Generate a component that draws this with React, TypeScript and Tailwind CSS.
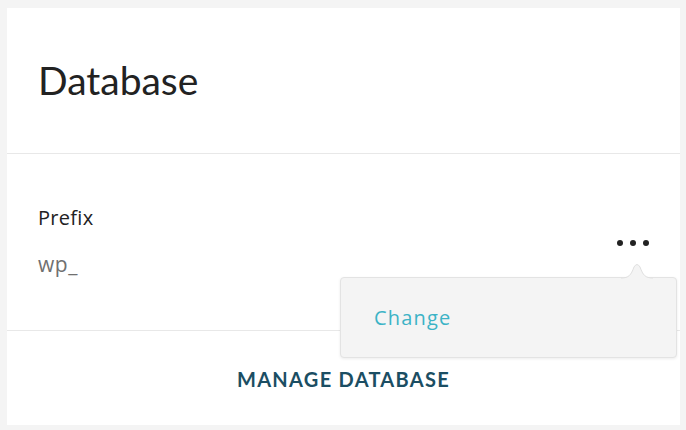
import React from 'react';

const font = { fontFamily: 'Lato, "Open Sans", sans-serif' };
const openSans = { fontFamily: '"Open Sans", Lato, sans-serif' };

const MoreDots: React.FC = () => (
  <div className="flex items-center gap-[7px]">
    <span className="block w-[6px] h-[6px] rounded-full bg-[#222]" />
    <span className="block w-[6px] h-[6px] rounded-full bg-[#222]" />
    <span className="block w-[6px] h-[6px] rounded-full bg-[#222]" />
  </div>
);

const Popover: React.FC = () => (
  <div className="absolute left-[333px] top-[269px] w-[337px] h-[81px]">
    {/* arrow */}
    <svg
      className="absolute left-[281px] top-[-14px]"
      width="32"
      height="16"
      viewBox="0 0 32 16"
    >
      <path
        d="M0 15 C8 15 10 12 13 4 Q16 -1 19 4 C22 12 24 15 32 15"
        fill="#f4f4f4"
        stroke="#e0e0e0"
        strokeWidth="1"
      />
    </svg>
    <div className="w-full h-full bg-[#f4f4f4] border border-[#e3e3e3] rounded-[4px] shadow-[0_1px_3px_rgba(0,0,0,0.08)] flex items-center px-[33px]">
      <span className="text-[20px] tracking-[1.2px] text-[#3cb3c6] leading-none" style={openSans}>
        Change
      </span>
    </div>
  </div>
);

export default function App() {
  return (
    <div className="w-[686px] h-[430px] bg-[#f4f4f4] pt-[8px] pl-[7px]" style={font}>
      <div className="relative w-[673px] h-[417px] bg-white flex flex-col">
        <div className="h-[146px] flex items-center px-[31px] border-b border-[#e8e8e8]">
          <h1 className="text-[39px] text-[#222] leading-none">Database</h1>
        </div>
        <div className="h-[177px] flex items-center justify-between px-[31px] border-b border-[#e8e8e8]">
          <div className="flex flex-col gap-[26px] pb-[2px]" style={openSans}>
            <span className="text-[20px] tracking-[0.3px] text-[#222] leading-none [font-variant-ligatures:none]">
              Prefix
            </span>
            <span className="text-[21px] tracking-[0.6px] text-[#707070] leading-none">wp_</span>
          </div>
          <div className="pt-[2px]">
            <MoreDots />
          </div>
        </div>
        <div className="flex-1 flex items-center justify-center">
          <span className="text-[20px] font-bold tracking-[1.3px] text-[#1b4e63] pt-[2px]">MANAGE DATABASE</span>
        </div>
        <Popover />
      </div>
    </div>
  );
}
